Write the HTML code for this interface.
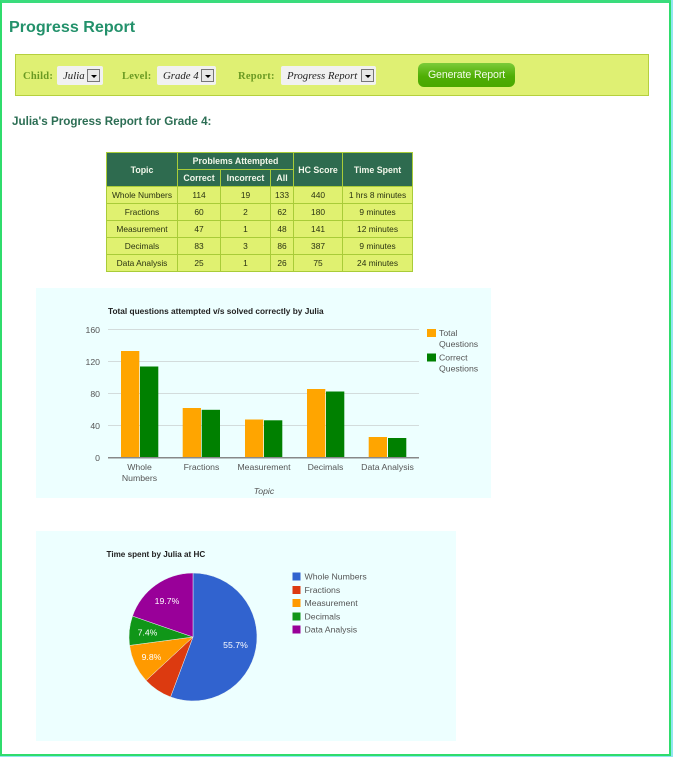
<!DOCTYPE html>
<html lang="en">
<head>
<meta charset="utf-8">
<title>Progress Report</title>
<style>
html,body{margin:0;padding:0;width:673px;height:757px;overflow:hidden;background:#8fe6f0;}
body{position:relative;font-family:"Liberation Sans",Arial,sans-serif;}
#frame{position:absolute;left:0;top:0;width:667px;height:751px;border:2px solid #2fdc6c;border-top:3px solid #3adc7c;background:#fff;}
h1{position:absolute;left:9px;top:17px;margin:0;font-size:16.1px;line-height:20px;font-weight:bold;color:#23916b;white-space:nowrap;}
#bar{position:absolute;left:15px;top:54px;width:632px;height:40px;background:#dff073;border:1px solid #b5d03e;}
.lbl{position:absolute;top:70px;font-family:"Liberation Serif",serif;font-weight:bold;font-size:10.5px;line-height:13px;color:#6a9a22;letter-spacing:.25px;white-space:nowrap;}
.sel{position:absolute;top:66px;height:19px;background:#f1f1f1;border-radius:2px;}
.sel span{position:absolute;left:6px;top:4px;font-family:"Liberation Serif",serif;font-style:italic;font-size:10.8px;line-height:13px;color:#222;white-space:nowrap;}
.sel i{position:absolute;top:3px;width:11px;height:11px;border:1px solid #777;background:#e8e8e8;}
.sel i:after{content:"";position:absolute;left:3px;top:5px;border:3px solid transparent;border-top:3px solid #000;border-bottom:0;}
#btn{position:absolute;left:418px;top:63px;width:97px;height:24px;border-radius:6px;background:linear-gradient(#7ccb3a,#4fae05 55%,#4aa800);color:#f2fbe8;font-size:10.6px;letter-spacing:-.12px;line-height:25px;text-align:center;}
h2{position:absolute;left:12px;top:114px;margin:0;font-size:11.65px;line-height:15px;font-weight:bold;color:#2c6e54;white-space:nowrap;}
table{position:absolute;left:106px;top:152px;width:306px;height:119px;border-collapse:collapse;table-layout:fixed;font-family:"Liberation Sans",sans-serif;font-size:8.4px;color:#2a3312;}
th,td{border:1px solid #a9cc38;padding:1px 0 0;text-align:center;height:15px;line-height:15px;white-space:nowrap;overflow:hidden;}
th{background:#2e6b4f;color:#f2f7ea;font-size:8.8px;}
td{background:#e0f170;}
.panel{position:absolute;background:#edffff;}
svg{position:absolute;left:0;top:0;}
svg text{font-family:"Liberation Sans",Arial,sans-serif;}
</style>
</head>
<body>
<div id="frame"></div>
<h1>Progress Report</h1>
<div id="bar"></div>
<div class="lbl" style="left:23px">Child:</div>
<div class="sel" style="left:57px;width:46px"><span>Julia</span><i style="left:30px"></i></div>
<div class="lbl" style="left:122px">Level:</div>
<div class="sel" style="left:157px;width:59px"><span>Grade 4</span><i style="left:44px"></i></div>
<div class="lbl" style="left:238px">Report:</div>
<div class="sel" style="left:281px;width:95px"><span>Progress Report</span><i style="left:80px"></i></div>
<div id="btn">Generate Report</div>
<h2>Julia's Progress Report for Grade 4:</h2>

<table>
<colgroup><col style="width:71px"><col style="width:43px"><col style="width:50px"><col style="width:23px"><col style="width:49px"><col style="width:70px"></colgroup>
<tr><th rowspan="2">Topic</th><th colspan="3">Problems Attempted</th><th rowspan="2">HC Score</th><th rowspan="2">Time Spent</th></tr>
<tr><th>Correct</th><th>Incorrect</th><th>All</th></tr>
<tr><td>Whole Numbers</td><td>114</td><td>19</td><td>133</td><td>440</td><td>1 hrs 8 minutes</td></tr>
<tr><td>Fractions</td><td>60</td><td>2</td><td>62</td><td>180</td><td>9 minutes</td></tr>
<tr><td>Measurement</td><td>47</td><td>1</td><td>48</td><td>141</td><td>12 minutes</td></tr>
<tr><td>Decimals</td><td>83</td><td>3</td><td>86</td><td>387</td><td>9 minutes</td></tr>
<tr><td>Data Analysis</td><td>25</td><td>1</td><td>26</td><td>75</td><td>24 minutes</td></tr>
</table>

<div class="panel" style="left:36px;top:288px;width:455px;height:210px"></div>
<div class="panel" style="left:36px;top:531px;width:420px;height:210px"></div>

<svg width="673" height="757" viewBox="0 0 673 757">
  <text x="108" y="314" font-size="8.3" font-weight="bold" fill="#222">Total questions attempted v/s solved correctly by Julia</text>
  <g stroke="#d3dcdc" stroke-width="1">
    <line x1="108" y1="329.5" x2="419" y2="329.5"/>
    <line x1="108" y1="361.5" x2="419" y2="361.5"/>
    <line x1="108" y1="393.5" x2="419" y2="393.5"/>
    <line x1="108" y1="425.5" x2="419" y2="425.5"/>
  </g>
  <g font-size="8.7" fill="#555" text-anchor="end">
    <text x="100" y="333">160</text>
    <text x="100" y="365">120</text>
    <text x="100" y="397">80</text>
    <text x="100" y="429">40</text>
    <text x="100" y="461">0</text>
  </g>
  <g fill="#ffa500">
    <rect x="121" y="351" width="18.3" height="107"/>
    <rect x="182.7" y="408" width="18.3" height="50"/>
    <rect x="245" y="419.5" width="18.3" height="38.5"/>
    <rect x="307" y="389" width="18.3" height="69"/>
    <rect x="368.7" y="437" width="18.3" height="21"/>
  </g>
  <g fill="#008000">
    <rect x="140" y="366.5" width="18.3" height="91.5"/>
    <rect x="201.7" y="409.8" width="18.3" height="48.2"/>
    <rect x="264" y="420.3" width="18.3" height="37.7"/>
    <rect x="326" y="391.5" width="18.3" height="66.5"/>
    <rect x="388" y="438" width="18.3" height="20"/>
  </g>
  <rect x="108" y="457" width="311" height="1.5" fill="#888"/>
  <g font-size="8.7" fill="#555" text-anchor="middle">
    <text x="139.5" y="470">Whole</text>
    <text x="139.5" y="481">Numbers</text>
    <text x="201.5" y="470">Fractions</text>
    <text x="264" y="470">Measurement</text>
    <text x="325.5" y="470">Decimals</text>
    <text x="387.5" y="470">Data Analysis</text>
    <text x="264" y="494" font-style="italic">Topic</text>
  </g>
  <rect x="427" y="329" width="9" height="8" fill="#ffa500"/>
  <rect x="427" y="353.5" width="9" height="8" fill="#008000"/>
  <g font-size="8.7" fill="#555">
    <text x="439" y="336">Total</text>
    <text x="439" y="347">Questions</text>
    <text x="439" y="360.5">Correct</text>
    <text x="439" y="371.5">Questions</text>
  </g>

  <text x="106.5" y="557" font-size="8.15" font-weight="bold" fill="#222">Time spent by Julia at HC</text>
  <g stroke="#e8f2f2" stroke-width=".5">
    <path d="M193 637 L193 573 A64 64 0 1 1 170.56 696.94 Z" fill="#3163cf"/>
    <path d="M193 637 L170.56 696.94 A64 64 0 0 1 146.09 680.53 Z" fill="#dc3a10"/>
    <path d="M193 637 L146.09 680.53 A64 64 0 0 1 129.56 645.42 Z" fill="#ff9a00"/>
    <path d="M193 637 L129.56 645.42 A64 64 0 0 1 132.51 616.08 Z" fill="#109618"/>
    <path d="M193 637 L132.51 616.08 A64 64 0 0 1 193 573 Z" fill="#990099"/>
  </g>
  <g font-size="8.7" fill="#fff" text-anchor="middle">
    <text x="235.5" y="648">55.7%</text>
    <text x="167" y="604">19.7%</text>
    <text x="147.5" y="635.5">7.4%</text>
    <text x="151.5" y="660">9.8%</text>
  </g>
  <rect x="292.5" y="572.5" width="8" height="8" fill="#3163cf"/>
  <rect x="292.5" y="586" width="8" height="8" fill="#dc3a10"/>
  <rect x="292.5" y="599" width="8" height="8" fill="#ff9a00"/>
  <rect x="292.5" y="612.5" width="8" height="8" fill="#109618"/>
  <rect x="292.5" y="625.5" width="8" height="8" fill="#990099"/>
  <g font-size="8.7" fill="#555">
    <text x="304.5" y="579.5">Whole Numbers</text>
    <text x="304.5" y="593">Fractions</text>
    <text x="304.5" y="606">Measurement</text>
    <text x="304.5" y="619.5">Decimals</text>
    <text x="304.5" y="632.5">Data Analysis</text>
  </g>
</svg>
</body>
</html>
